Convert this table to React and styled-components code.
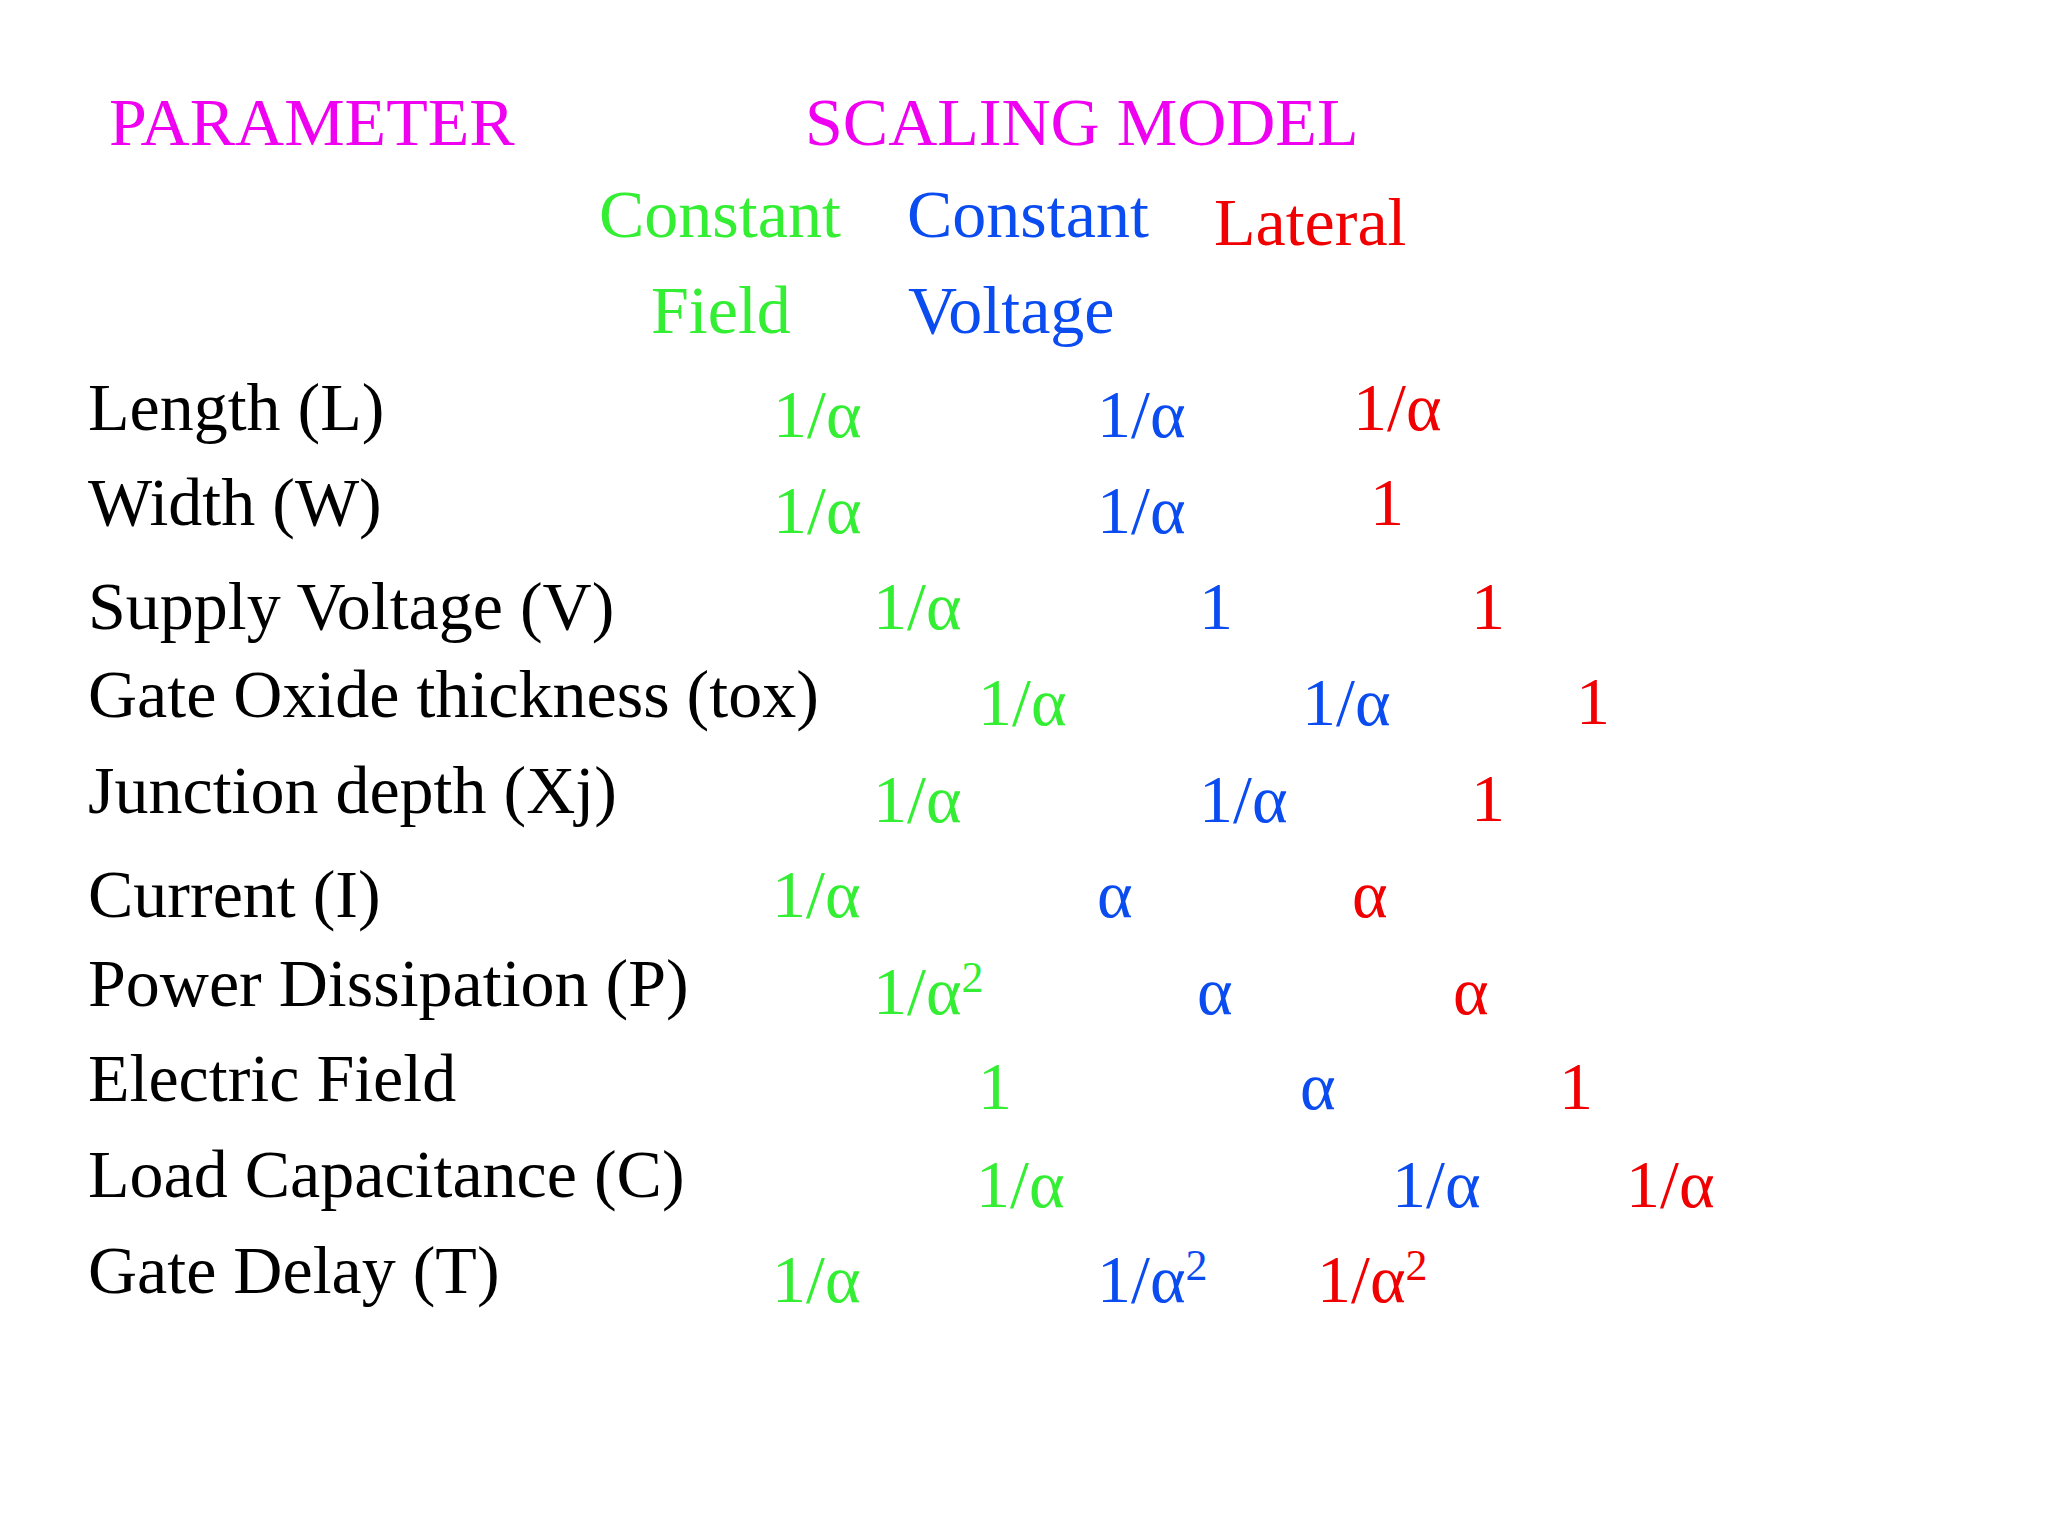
import styled, { createGlobalStyle } from 'styled-components';

const MAGENTA = '#f000f0';
const GREEN = '#33ee33';
const BLUE = '#0a4cf0';
const RED = '#f00000';
const BLACK = '#000000';

// x = left edge of the text box, dy = drop below the label's baseline
const rows = [
  { label: 'Length (L)', h: 95, cells: [{ x: 773, t: '1/α', dy: 7 }, { x: 1097, t: '1/α', dy: 7 }, { x: 1353, t: '1/α', dy: 0 }] },
  { label: 'Width (W)', h: 104, cells: [{ x: 773, t: '1/α', dy: 8 }, { x: 1097, t: '1/α', dy: 8 }, { x: 1370, t: '1', dy: 0 }] },
  { label: 'Supply Voltage (V)', h: 88, cells: [{ x: 873, t: '1/α', dy: 0 }, { x: 1199, t: '1', dy: 0 }, { x: 1471, t: '1', dy: 0 }] },
  { label: 'Gate Oxide thickness (tox)', h: 96, cells: [{ x: 978, t: '1/α', dy: 8 }, { x: 1302, t: '1/α', dy: 8 }, { x: 1576, t: '1', dy: 7 }] },
  { label: 'Junction depth (Xj)', h: 104, cells: [{ x: 873, t: '1/α', dy: 9 }, { x: 1199, t: '1/α', dy: 9 }, { x: 1471, t: '1', dy: 8 }] },
  { label: 'Current (I)', h: 89, cells: [{ x: 772, t: '1/α', dy: 0 }, { x: 1097, t: 'α', dy: 0 }, { x: 1352, t: 'α', dy: 0 }] },
  { label: 'Power Dissipation (P)', h: 95, cells: [{ x: 873, t: '1/α', sq: true, dy: 8 }, { x: 1197, t: 'α', dy: 8 }, { x: 1453, t: 'α', dy: 8 }] },
  { label: 'Electric Field', h: 96, cells: [{ x: 978, t: '1', dy: 8 }, { x: 1300, t: 'α', dy: 8 }, { x: 1559, t: '1', dy: 8 }] },
  { label: 'Load Capacitance (C)', h: 96, cells: [{ x: 976, t: '1/α', dy: 10 }, { x: 1392, t: '1/α', dy: 10 }, { x: 1626, t: '1/α', dy: 10 }] },
  { label: 'Gate Delay (T)', h: 68, cells: [{ x: 772, t: '1/α', dy: 9 }, { x: 1097, t: '1/α', sq: true, dy: 9 }, { x: 1317, t: '1/α', sq: true, dy: 9 }] },
];

const columnColors = [GREEN, BLUE, RED];
const LABEL_X = 88;

export default function App() {
  return (
    <>
      <GlobalStyle />
      <Slide>
        <Line $h={92} $x={109}>
          <Cell $w={696} $color={MAGENTA}>PARAMETER</Cell>
          <Cell $color={MAGENTA}>SCALING MODEL</Cell>
        </Line>
        <Line $h={96} $x={599}>
          <Cell $w={308} $color={GREEN}>Constant</Cell>
          <Cell $w={307} $color={BLUE}>Constant</Cell>
          <Cell $color={RED} $dy={8}>Lateral</Cell>
        </Line>
        <Line $h={97} $x={651}>
          <Cell $w={257} $color={GREEN}>Field</Cell>
          <Cell $color={BLUE}>Voltage</Cell>
        </Line>
        {rows.map((row) => (
          <Line key={row.label} $h={row.h} $x={LABEL_X}>
            <Cell $w={row.cells[0].x - LABEL_X} $color={BLACK}>
              {row.label}
            </Cell>
            {row.cells.map((cell, i) => {
              const next = row.cells[i + 1];
              return (
                <Cell
                  key={i}
                  $w={next ? next.x - cell.x : undefined}
                  $dy={cell.dy}
                  $color={columnColors[i]}
                >
                  {cell.t}
                  {cell.sq && <Sup>2</Sup>}
                </Cell>
              );
            })}
          </Line>
        ))}
      </Slide>
    </>
  );
}

const GlobalStyle = createGlobalStyle`
  html, body {
    margin: 0;
    padding: 0;
    background: #ffffff;
  }
`;

const Slide = styled.main`
  width: 2048px;
  height: 1536px;
  box-sizing: border-box;
  padding-top: 88px;
  background: #ffffff;
  font-family: "Liberation Serif", "Times New Roman", serif;
  font-size: 68px;
  line-height: 68px;
  overflow: hidden;
`;

const Line = styled.div`
  display: flex;
  align-items: flex-start;
  height: ${(p) => p.$h}px;
  padding-left: ${(p) => p.$x}px;
`;

const Cell = styled.span`
  flex: none;
  display: block;
  white-space: nowrap;
  width: ${(p) => (p.$w ? `${p.$w}px` : 'auto')};
  padding-top: ${(p) => p.$dy || 0}px;
  color: ${(p) => p.$color};
`;

const Sup = styled.span`
  font-size: 44px;
  line-height: 0;
  vertical-align: 22px;
`;
